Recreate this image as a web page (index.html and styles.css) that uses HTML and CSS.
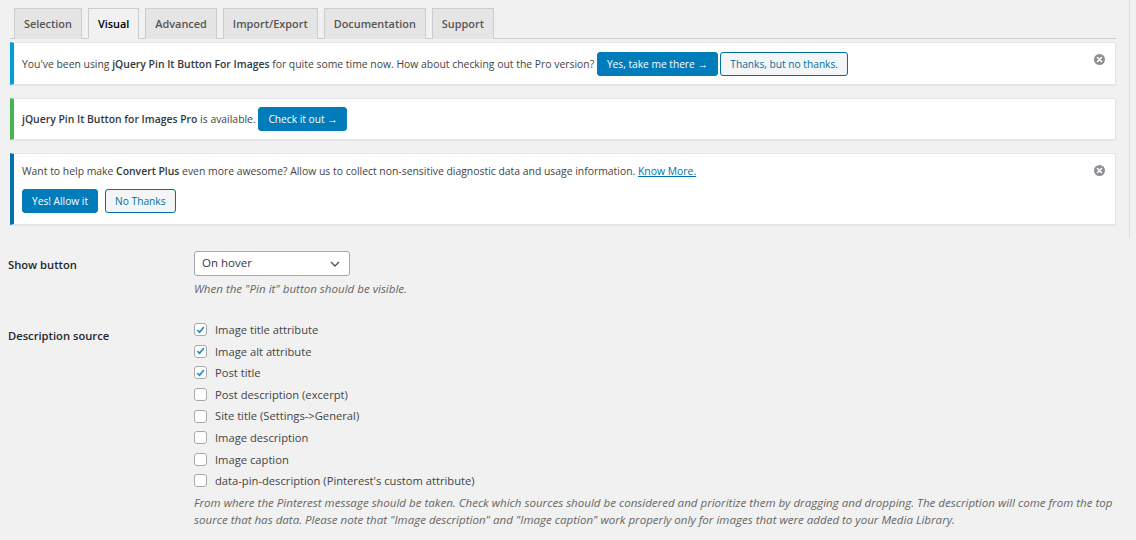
FILE: index.html
```html
<!DOCTYPE html>
<html>
<head>
<meta charset="utf-8">
<link rel="stylesheet" href="styles.css">
</head>
<body>
<div class="page">
  <div class="wrap">
    <nav class="tabs">
      <a class="tab">Selection</a>
      <a class="tab active">Visual</a>
      <a class="tab">Advanced</a>
      <a class="tab">Import/Export</a>
      <a class="tab">Documentation</a>
      <a class="tab">Support</a>
    </nav>

    <div class="notice notice-info">
      <p class="notice-text">You've been using <strong>jQuery Pin It Button For Images</strong> for quite some time now. How about checking out the Pro version? <a class="btn btn-primary">Yes, take me there &rarr;</a> <a class="btn btn-secondary">Thanks, but no thanks.</a></p>
      <span class="dismiss"><svg viewBox="0 0 10 10" width="11" height="11"><circle cx="5" cy="5" r="5" fill="#8c8f94"/><path d="M3.2 3.2 L6.8 6.8 M6.8 3.2 L3.2 6.8" stroke="#fff" stroke-width="1.5" stroke-linecap="round"/></svg></span>
    </div>

    <div class="notice notice-success">
      <p class="notice-text"><strong>jQuery Pin It Button for Images Pro</strong> is available. <a class="btn btn-primary">Check it out &rarr;</a></p>
    </div>

    <div class="notice notice-blue notice-stack">
      <p class="notice-line">Want to help make <strong>Convert Plus</strong> even more awesome? Allow us to collect non-sensitive diagnostic data and usage information. <a class="link">Know More.</a></p>
      <p class="notice-actions">
        <a class="btn btn-primary">Yes! Allow it</a>
        <a class="btn btn-secondary">No Thanks</a>
      </p>
      <span class="dismiss"><svg viewBox="0 0 10 10" width="11" height="11"><circle cx="5" cy="5" r="5" fill="#8c8f94"/><path d="M3.2 3.2 L6.8 6.8 M6.8 3.2 L3.2 6.8" stroke="#fff" stroke-width="1.5" stroke-linecap="round"/></svg></span>
    </div>
  </div>
  <div class="side"></div>
</div>

<div class="form">
  <div class="row row-select">
    <div class="label">Show button</div>
    <div class="field">
      <div class="select"><span>On hover</span><svg viewBox="0 0 10 6" width="10" height="6"><path d="M1 1 L5 5 L9 1" fill="none" stroke="#555" stroke-width="1.4"/></svg></div>
      <p class="desc">When the "Pin it" button should be visible.</p>
    </div>
  </div>
  <div class="row row-checks">
    <div class="label label-checks">Description source</div>
    <div class="field">
      <ul class="checks">
        <li><span class="cb checked"><svg viewBox="0 0 12 12" width="12" height="12"><path d="M2.6 6.2 L5 8.6 L9.6 2.8" fill="none" stroke="#1e8cbe" stroke-width="1.8"/></svg></span>Image title attribute</li>
        <li><span class="cb checked"><svg viewBox="0 0 12 12" width="12" height="12"><path d="M2.6 6.2 L5 8.6 L9.6 2.8" fill="none" stroke="#1e8cbe" stroke-width="1.8"/></svg></span>Image alt attribute</li>
        <li><span class="cb checked"><svg viewBox="0 0 12 12" width="12" height="12"><path d="M2.6 6.2 L5 8.6 L9.6 2.8" fill="none" stroke="#1e8cbe" stroke-width="1.8"/></svg></span>Post title</li>
        <li><span class="cb"></span>Post description (excerpt)</li>
        <li><span class="cb"></span>Site title (Settings-&gt;General)</li>
        <li><span class="cb"></span>Image description</li>
        <li><span class="cb"></span>Image caption</li>
        <li><span class="cb"></span>data-pin-description (Pinterest's custom attribute)</li>
      </ul>
      <p class="desc desc-long">From where the Pinterest message should be taken. Check which sources should be considered and prioritize them by dragging and dropping. The description will come from the top source that has data. Please note that "Image description" and "Image caption" work properly only for images that were added to your Media Library.</p>
    </div>
  </div>
</div>
</body>
</html>
```

FILE: styles.css
```css
* { box-sizing: border-box; }
html, body { margin: 0; padding: 0; }
body {
  background: #f1f1f1;
  color: #444;
  font-family: "Open Sans", "Noto Sans", sans-serif;
  font-size: 10.4px;
  line-height: 1.4;
  width: 1136px;
  height: 540px;
  overflow: hidden;
}
p { margin: 0; }

.page { display: flex; align-items: flex-start; }
.wrap { width: 1106px; margin-left: 10px; }
.side { width: 1px; height: 238px; margin-left: 13px; margin-bottom: -13px; border-left: 1px solid #dcdcdc; }

.tabs {
  display: flex;
  gap: 6px;
  padding: 8px 0 0 4px;
  border-bottom: 1px solid #ccc;
  height: 39px;
}
.tab {
  display: block;
  height: 31px;
  padding: 0 9px;
  line-height: 29px;
  font-size: 10.9px;
  font-weight: 600;
  color: #555;
  background: #e5e5e5;
  border: 1px solid #ccc;
  border-bottom: none;
}
.tab.active {
  background: #f1f1f1;
  color: #000;
  border-bottom: 1px solid #f1f1f1;
  position: relative;
  z-index: 1;
}

.notice {
  position: relative;
  background: #fff;
  border: 1px solid #e2e4e7;
  border-left: 4px solid #00a0d2;
  box-shadow: 0 1px 1px rgba(0,0,0,.04);
  margin-top: 3px;
  padding: 9px 40px 8px 8px;
  display: flex;
  flex-direction: column;
}
.notice + .notice { margin-top: 13px; }
.notice-success { border-left-color: #46b450; padding-top: 8px; }
.notice-blue { border-left-color: #0073aa; }
.notice-stack { padding-top: 8px; padding-bottom: 11px; }
.notice-text { line-height: 24px; height: 24px; white-space: nowrap; }
.notice-line { line-height: 18px; }
.notice-text strong, .notice-line strong { font-weight: 600; color: #32373c; }
.notice-actions { margin-top: 9px; display: flex; gap: 7px; }

.btn {
  display: inline-block;
  height: 24px;
  line-height: 22px;
  padding: 0 9px;
  border-radius: 3px;
  font-size: 10.2px;
  vertical-align: top;
  white-space: nowrap;
}
.btn-primary { background: #007cba; border: 1px solid #007cba; color: #fff; }
.btn-secondary { background: #f3f5f6; border: 1px solid #0071a1; color: #0071a1; }

.link { color: #0073aa; text-decoration: underline; }

.dismiss {
  position: absolute;
  right: 10px;
  top: 11px;
  width: 11px;
  height: 11px;
  display: block;
}
.dismiss svg { display: block; }

.form { padding-left: 8px; margin-top: 26px; font-size: 11.2px; }
.row { display: flex; }
.label { width: 186px; font-weight: 600; color: #23282d; }
.row-select .label { padding-top: 6px; }
.row-checks { margin-top: 22px; }
.label-checks { padding-top: 9px; }
.field { flex: 1; }

.select {
  width: 156px;
  height: 25px;
  background: #fff;
  border: 1px solid #a7aaad;
  border-radius: 3px;
  display: flex;
  align-items: center;
  justify-content: space-between;
  padding: 0 9px 0 7px;
  font-size: 11.5px;
  color: #32373c;
}
.select svg { display: block; }
.desc { font-style: italic; color: #666; margin-top: 4px; line-height: 17px; font-size: 11.55px; }

.checks { list-style: none; margin: 0; padding: 0; }
.checks li { display: flex; align-items: center; height: 21.6px; color: #444; }
.cb {
  width: 13px;
  height: 13px;
  border: 1px solid #a7aaad;
  border-radius: 3px;
  background: #fff;
  margin-right: 8px;
  flex: none;
  display: flex;
  align-items: center;
  justify-content: center;
}
.cb svg { display: block; }
.desc-long { margin-top: 2px; width: 920px; }
```
